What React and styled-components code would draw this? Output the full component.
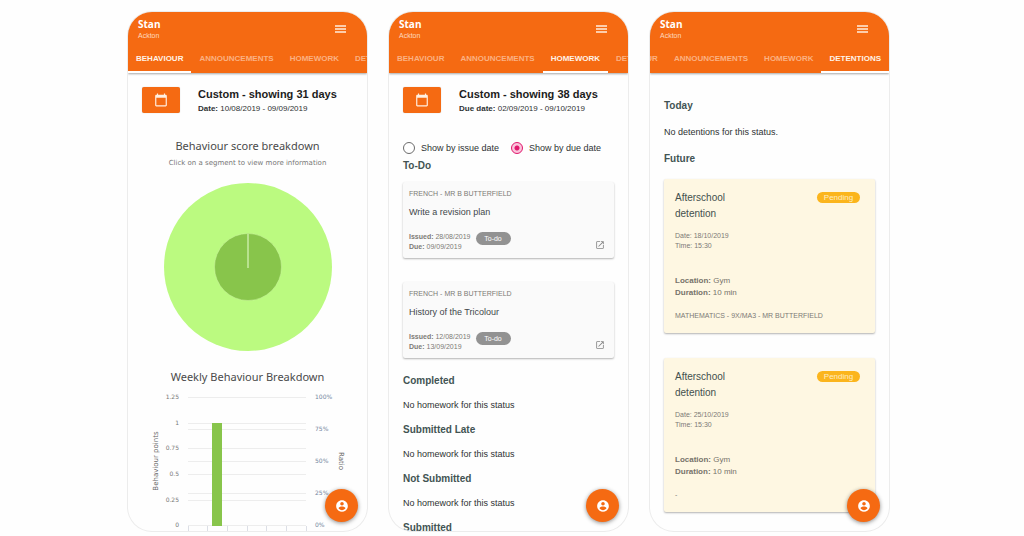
import React from "react";
import styled, { createGlobalStyle } from "styled-components";

const GlobalStyle = createGlobalStyle`
  *, *::before, *::after { box-sizing: border-box; }
  body {
    margin: 0;
    background: #fefefe;
    color: #2e3233;
    font-family: "Liberation Sans", Arial, sans-serif;
    font-size: 9px;
  }
  h1, h2, h3, h4, p { margin: 0; }
  button { border: 0; padding: 0; font: inherit; cursor: pointer; }
`;

const ORANGE = "#f56a12";

const Page = styled.main`
  height: 100vh;
  padding: 12px 135px 5px 128px;
  display: grid;
  grid-template-columns: repeat(3, minmax(0, 1fr));
  gap: 22px;
`;

const Phone = styled.section`
  position: relative;
  min-height: 0;
  overflow: hidden;
  border-radius: 24px;
  background: #fefefe;
  box-shadow: 0 0 0 1px #ececec;
`;

const Header = styled.header`
  background: ${ORANGE};
  box-shadow: 0 1px 2px rgba(0, 0, 0, 0.35);
`;

const TitleBar = styled.div`
  display: flex;
  justify-content: space-between;
  height: 33px;
  padding: 6px 21px 0 10px;
  color: #fff;
`;

const PupilName = styled.h1`
  font: bold 10px/12px "Open Sans", sans-serif;
`;

const PupilPlace = styled.p`
  font-size: 7px;
  line-height: 12px;
  color: #ffd9bd;
`;

const MenuButton = styled.button`
  display: flex;
  align-items: center;
  height: 22px;
  background: none;
  color: #ffeede;
`;

const Tabs = styled.nav`
  display: flex;
  justify-content: ${(p) => (p.$end ? "flex-end" : "flex-start")};
  overflow: hidden;
`;

const Tab = styled.a`
  flex: none;
  height: 28px;
  padding: 0 8px;
  border-bottom: 2px solid ${(p) => (p.$active ? "#fff" : "transparent")};
  color: ${(p) => (p.$active ? "#fff3e8" : "#fbb182")};
  font-size: 8px;
  font-weight: bold;
  line-height: 28px;
  text-decoration: none;
`;

const Content = styled.div`
  padding: 14px;
`;

const RangeRow = styled.div`
  display: flex;
  gap: 18px;
`;

const CalendarButton = styled.button`
  display: grid;
  place-items: center;
  flex: none;
  width: 38px;
  height: 26px;
  border-radius: 2px;
  background: ${ORANGE};
  color: #fff0e2;
  box-shadow: 0 0 1px rgba(0, 0, 0, 0.3);
`;

const RangeTitle = styled.h2`
  font-size: 11px;
  line-height: 14px;
  color: #1c1c1c;
  white-space: nowrap;
`;

const RangeDates = styled.p`
  font-size: 8px;
  line-height: 16px;
`;

const ChartTitle = styled.h3`
  margin-top: ${(p) => p.$top}px;
  font: 11px/18px "Noto Sans", sans-serif;
  color: #4a4a4a;
  text-align: center;
  white-space: nowrap;
`;

const ChartHint = styled.p`
  font: 7px/16px "DejaVu Sans", sans-serif;
  color: #777;
  text-align: center;
`;

const Pie = styled.svg`
  display: block;
  width: 168px;
  margin: 12px auto 0;
`;

const WeeklyChart = styled.svg`
  display: block;
  width: calc(100% + 28px);
  margin: 0 -14px;
  font: 6px "DejaVu Sans", sans-serif;
`;

const Fab = styled.button`
  position: absolute;
  right: 9px;
  bottom: 9px;
  display: grid;
  place-items: center;
  width: 33px;
  height: 33px;
  border-radius: 50%;
  background: ${ORANGE};
  color: #fff;
  box-shadow: 0 1px 4px rgba(0, 0, 0, 0.45);
`;

const RadioRow = styled.div`
  display: flex;
  gap: 12px;
  margin-top: 22px;
`;

const RadioLabel = styled.label`
  display: flex;
  align-items: center;
  gap: 6px;
  line-height: 18px;
  white-space: nowrap;
`;

const Radio = styled.input`
  appearance: none;
  width: 12px;
  height: 12px;
  margin: 0;
  border: 1px solid #6b6b6b;
  border-radius: 50%;
  background: #fff;
  &:checked {
    border-color: #e0176c;
    background: radial-gradient(circle, #e0176c 2px, #fbc4dc 3px);
  }
`;

const Heading = styled.h3`
  font-size: 10px;
  line-height: 18px;
  color: #425453;
`;

const Note = styled.p`
  margin: 9px 0;
  line-height: 13px;
`;

const Card = styled.article`
  border-radius: 2px;
  box-shadow: 0 1px 2px rgba(0, 0, 0, 0.3);
`;

const HomeworkList = styled.div`
  display: grid;
  gap: 24px;
  margin: 7px 0 14px;
`;

const HomeworkCard = styled(Card)`
  padding: 6px;
  background: #fafafa;
`;

const Subject = styled.p`
  font-size: 7px;
  line-height: 12px;
  color: #7d7a76;
`;

const HomeworkTitle = styled.h4`
  margin: 5px 0 13px;
  font-size: 9px;
  font-weight: normal;
  line-height: 14px;
  color: #3f474a;
`;

const HomeworkFoot = styled.div`
  display: flex;
  gap: 5px;
`;

const Dates = styled.p`
  font-size: 7px;
  line-height: 10px;
  color: #7d7a76;
`;

const Pill = styled.span`
  display: grid;
  place-items: center;
  flex: none;
  border-radius: 7px;
  color: #fff;
`;

const TodoPill = styled(Pill)`
  width: 35px;
  height: 13px;
  background: #929292;
  font-size: 7px;
`;

const PendingPill = styled(Pill)`
  width: 43px;
  height: 11px;
  margin: 2px 4px 0 0;
  background: #fbb51d;
  color: #ffedc2;
  font-size: 8px;
`;

const OpenLink = styled.a`
  align-self: flex-end;
  height: 12px;
  margin: 0 3px 0 auto;
  color: #858585;
`;

const DetentionSections = styled.div`
  display: flex;
  flex-direction: column;
  gap: 11px;
  padding-top: 10px;

  ${Note} { margin: 0; }
`;

const DetentionList = styled.div`
  display: grid;
  gap: 25px;
`;

const DetentionCard = styled(Card)`
  padding: 11px;
  background: #fef7e2;
`;

const DetentionTop = styled.div`
  display: flex;
  justify-content: space-between;
  align-items: flex-start;
  margin-bottom: 9px;
`;

const DetentionTitle = styled.h4`
  width: min-content;
  font-size: 10px;
  font-weight: normal;
  line-height: 16px;
  color: #43504e;
`;

const Details = styled.p`
  margin: 24px 0 11px;
  font-size: 8px;
  line-height: 12px;
  color: #77736a;
`;

const CalendarIcon = () => (
  <svg width="14" height="14" viewBox="0 0 24 24" fill="currentColor" aria-hidden="true">
    <path d="M20 3h-1V1h-2v2H7V1H5v2H4c-1.100 0-2 .9-2 2v16c0 1.100.9 2 2 2h16c1.100 0 2-.9 2-2V5c0-1.100-.9-2-2-2zm0 18H4V8h16v13z" />
  </svg>
);

const MenuIcon = () => (
  <svg width="12" height="10" viewBox="0 0 12 10" stroke="currentColor" strokeWidth="1.600" aria-hidden="true">
    <path d="M1 2h11M1 5h11M1 8h11" />
  </svg>
);

const AccountIcon = () => (
  <svg width="14" height="14" viewBox="0 0 24 24" fill="currentColor" aria-hidden="true">
    <path d="M12 2C6.480 2 2 6.480 2 12s4.480 10 10 10 10-4.480 10-10S17.520 2 12 2zm0 3c1.660 0 3 1.340 3 3s-1.340 3-3 3-3-1.340-3-3 1.340-3 3-3zm0 14.200c-2.500 0-4.710-1.280-6-3.220.03-1.990 4-3.080 6-3.080 1.990 0 5.970 1.090 6 3.080-1.290 1.940-3.500 3.220-6 3.220z" />
  </svg>
);

const OpenIcon = () => (
  <svg width="10" height="10" viewBox="0 0 24 24" fill="currentColor" aria-hidden="true">
    <path d="M19 19H5V5h7V3H5c-1.110 0-2 .9-2 2v14c0 1.100.89 2 2 2h14c1.100 0 2-.9 2-2v-7h-2v7zM14 3v2h3.590l-9.830 9.830 1.410 1.410L19 6.410V10h2V3h-7z" />
  </svg>
);

const TABS = ["Behaviour", "Announcements", "Homework", "Detentions"];

function Screen({ active, children }) {
  return (
    <Phone aria-label={active}>
      <Header>
        <TitleBar>
          <div>
            <PupilName>Stan</PupilName>
            <PupilPlace>Ackton</PupilPlace>
          </div>
          <MenuButton aria-label="Menu"><MenuIcon /></MenuButton>
        </TitleBar>
        <Tabs $end={active === "Detentions"}>
          {TABS.map((name) => (
            <Tab key={name} href={`#${name.toLowerCase()}`} $active={name === active}>
              {name.toUpperCase()}
            </Tab>
          ))}
        </Tabs>
      </Header>
      <Content>{children}</Content>
      <Fab aria-label="Account"><AccountIcon /></Fab>
    </Phone>
  );
}

function Range({ days, label, dates }) {
  return (
    <RangeRow>
      <CalendarButton aria-label="Choose dates"><CalendarIcon /></CalendarButton>
      <div>
        <RangeTitle>Custom - showing {days} days</RangeTitle>
        <RangeDates><b>{label}:</b> {dates}</RangeDates>
      </div>
    </RangeRow>
  );
}

const POINTS = [["1.25", 11], ["1", 37], ["0.75", 62], ["0.5", 88], ["0.25", 114], ["0", 139]];
const RATIOS = [["100%", 11], ["75%", 43], ["50%", 75], ["25%", 107], ["0%", 139]];

function Weekly() {
  return (
    <WeeklyChart viewBox="0 0 239 150" role="img" aria-label="Weekly behaviour points">
      {[...POINTS, ...RATIOS].map(([t, y]) => (
        <path key={t} d={`M60 ${y + 0.5}H178`} stroke="#ededed" />
      ))}
      {[60, 79, 99, 119, 138, 158, 178].map((x) => (
        <path key={x} d={`M${x + 0.5} 140v5`} stroke="#dcdfe6" />
      ))}
      <rect x="84" y="37" width="10" height="103" fill="#88c54b" />
      {POINTS.map(([t, y]) => (
        <text key={t} x="51" y={y + 2} textAnchor="end" fill="#777">{t}</text>
      ))}
      {RATIOS.map(([t, y]) => (
        <text key={t} x="187" y={y + 2} fill="#7486a0">{t}</text>
      ))}
      <text transform="translate(30 75) rotate(-90)" textAnchor="middle" fontSize="7" fill="#666">Behaviour points</text>
      <text transform="translate(211 75) rotate(90)" textAnchor="middle" fontSize="7" fill="#666">Ratio</text>
    </WeeklyChart>
  );
}

function Homework({ title, issued, due }) {
  return (
    <HomeworkCard>
      <Subject>FRENCH - MR B BUTTERFIELD</Subject>
      <HomeworkTitle>{title}</HomeworkTitle>
      <HomeworkFoot>
        <Dates>
          <b>Issued:</b> {issued}<br />
          <b>Due:</b> {due}
        </Dates>
        <TodoPill>To-do</TodoPill>
        <OpenLink href="#open" aria-label={`Open ${title}`}><OpenIcon /></OpenLink>
      </HomeworkFoot>
    </HomeworkCard>
  );
}

function Detention({ date, subject }) {
  return (
    <DetentionCard>
      <DetentionTop>
        <DetentionTitle>Afterschool detention</DetentionTitle>
        <PendingPill>Pending</PendingPill>
      </DetentionTop>
      <Dates>Date: {date}<br />Time: 15:30</Dates>
      <Details>
        <b>Location:</b> Gym<br />
        <b>Duration:</b> 10 min
      </Details>
      <Subject>{subject}</Subject>
    </DetentionCard>
  );
}

export default function App() {
  return (
    <>
      <GlobalStyle />
      <Page>
        <Screen active="Behaviour">
          <Range days={31} label="Date" dates="10/08/2019 - 09/09/2019" />
          <ChartTitle $top={20}>Behaviour score breakdown</ChartTitle>
          <ChartHint>Click on a segment to view more information</ChartHint>
          <Pie viewBox="0 0 168 168" role="img" aria-label="Behaviour score">
            <circle cx="84" cy="84" r="84" fill="#bbfa80" />
            <circle cx="84" cy="84" r="33.500" fill="#88c54b" stroke="#cdf5a2" strokeWidth="0.500" />
            <path d="M84 51v34" stroke="#c9eba4" strokeWidth="1.500" />
          </Pie>
          <ChartTitle $top={17}>Weekly Behaviour Breakdown</ChartTitle>
          <Weekly />
        </Screen>

        <Screen active="Homework">
          <Range days={38} label="Due date" dates="02/09/2019 - 09/10/2019" />
          <RadioRow>
            <RadioLabel><Radio type="radio" name="order" />Show by issue date</RadioLabel>
            <RadioLabel><Radio type="radio" name="order" defaultChecked />Show by due date</RadioLabel>
          </RadioRow>
          <Heading>To-Do</Heading>
          <HomeworkList>
            <Homework title="Write a revision plan" issued="28/08/2019" due="09/09/2019" />
            <Homework title="History of the Tricolour" issued="12/08/2019" due="13/09/2019" />
          </HomeworkList>
          {["Completed", "Submitted Late", "Not Submitted", "Submitted"].map((status) => (
            <React.Fragment key={status}>
              <Heading>{status}</Heading>
              <Note>No homework for this status</Note>
            </React.Fragment>
          ))}
        </Screen>

        <Screen active="Detentions">
          <DetentionSections>
            <Heading>Today</Heading>
            <Note>No detentions for this status.</Note>
            <Heading>Future</Heading>
            <DetentionList>
              <Detention date="18/10/2019" subject="MATHEMATICS - 9X/MA3 - MR BUTTERFIELD" />
              <Detention date="25/10/2019" subject="-" />
            </DetentionList>
          </DetentionSections>
        </Screen>
      </Page>
    </>
  );
}
